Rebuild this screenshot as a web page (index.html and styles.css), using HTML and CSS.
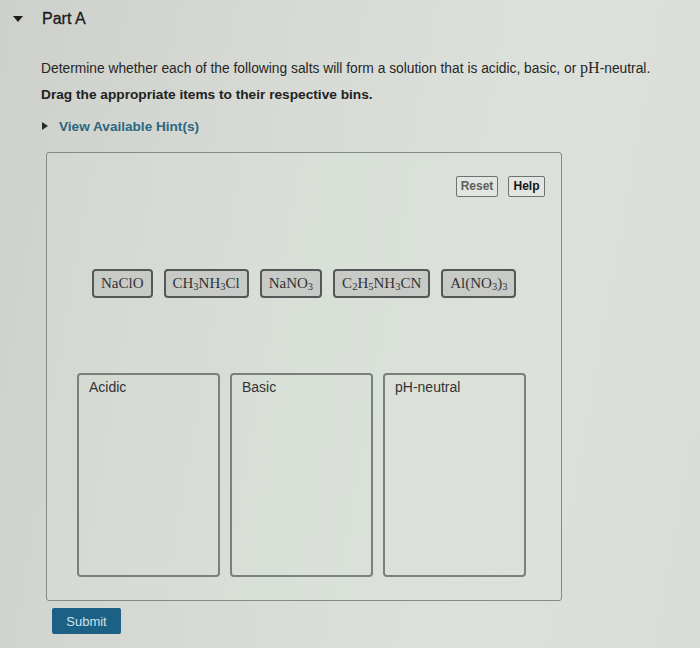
FILE: index.html
```html
<!DOCTYPE html>
<html>
<head>
<meta charset="utf-8">
<link rel="stylesheet" href="styles.css">
</head>
<body>
<div class="page">
  <div class="part-head">
    <span class="caret-down"></span>
    <span class="part-title">Part A</span>
  </div>
  <p class="prompt">Determine whether each of the following salts will form a solution that is acidic, basic, or <span class="math">pH</span>-neutral.</p>
  <p class="instr">Drag the appropriate items to their respective bins.</p>
  <div class="hint"><span class="caret-right"></span><span class="hint-text">View Available Hint(s)</span></div>

  <div class="dnd">
    <div class="toolbar">
      <button class="tbtn reset">Reset</button>
      <button class="tbtn help">Help</button>
    </div>
    <div class="chips">
      <div class="chip">NaClO</div>
      <div class="chip">CH<sub>3</sub>NH<sub>3</sub>Cl</div>
      <div class="chip">NaNO<sub>3</sub></div>
      <div class="chip">C<sub>2</sub>H<sub>5</sub>NH<sub>3</sub>CN</div>
      <div class="chip">Al(NO<sub>3</sub>)<sub>3</sub></div>
    </div>
    <div class="bins">
      <div class="bin"><span class="bin-label">Acidic</span></div>
      <div class="bin"><span class="bin-label">Basic</span></div>
      <div class="bin"><span class="bin-label">pH-neutral</span></div>
    </div>
  </div>
  <button class="submit">Submit</button>
</div>
</body>
</html>
```

FILE: styles.css
```css
html, body {
  margin: 0;
  padding: 0;
}
body {
  width: 700px;
  height: 648px;
  overflow: hidden;
  font-family: "Liberation Sans", Arial, sans-serif;
  color: #222;
  background: linear-gradient(100deg, #cdd0cb 0%, #d6d9d4 35%, #dde1db 70%, #d9dcd7 100%);
}
.page {
  padding-top: 10px;
}
.part-head {
  display: flex;
  align-items: center;
  height: 18px;
  padding-left: 13px;
}
.caret-down {
  width: 0;
  height: 0;
  border-left: 5.5px solid transparent;
  border-right: 5.5px solid transparent;
  border-top: 6px solid #1e1e1e;
  margin-right: 19px;
}
.part-title {
  font-size: 16px;
  color: #1a1a1a;
  -webkit-text-stroke: 0.3px #1a1a1a;
}
.prompt {
  margin: 31px 0 0 41px;
  font-size: 13.8px;
  line-height: 17px;
  color: #262626;
  white-space: nowrap;
}
.math {
  font-family: "Liberation Serif", "Times New Roman", serif;
  font-size: 16px;
}
.instr {
  margin: 9px 0 0 41px;
  font-size: 13.7px;
  line-height: 17px;
  font-weight: bold;
  color: #222;
}
.hint {
  display: flex;
  align-items: center;
  margin: 15px 0 0 42px;
  height: 16px;
}
.caret-right {
  width: 0;
  height: 0;
  border-top: 4.5px solid transparent;
  border-bottom: 4.5px solid transparent;
  border-left: 6px solid #2a2d2e;
  margin-right: 11px;
}
.hint-text {
  font-size: 13.6px;
  font-weight: bold;
  color: #2b6781;
}
.dnd {
  margin: 18px 0 0 46px;
  width: 514px;
  height: 447px;
  border: 1px solid #858a86;
  border-radius: 3px;
  background: linear-gradient(100deg, #d3d7d1 0%, #d9e0d8 50%, #dce2db 100%);
  box-sizing: content-box;
  display: flex;
  flex-direction: column;
}
.toolbar {
  display: flex;
  justify-content: flex-end;
  gap: 10px;
  padding: 23px 16px 0 0;
}
.tbtn {
  height: 21px;
  padding: 0 3px;
  border: 1px solid #6f736f;
  border-radius: 2px;
  background: #e2e5e1;
  font-family: "Liberation Sans", Arial, sans-serif;
  font-size: 12px;
  font-weight: bold;
  line-height: 19px;
}
.reset {
  width: 42px;
  color: #5e605e;
}
.help {
  width: 37px;
  color: #151515;
}
.chips {
  display: flex;
  gap: 11px;
  padding: 72px 0 0 45px;
}
.chip {
  height: 29px;
  box-sizing: border-box;
  padding: 0 7px;
  border: 2px solid #555856;
  border-radius: 4px;
  background: #c7cac6;
  font-family: "Liberation Serif", "Times New Roman", serif;
  font-size: 15px;
  line-height: 24px;
  color: #333;
  white-space: nowrap;
}
.chip sub {
  font-size: 10.5px;
  line-height: 0;
  vertical-align: -2px;
}
.bins {
  display: flex;
  gap: 10px;
  padding: 75px 0 0 30px;
}
.bin {
  width: 143px;
  height: 204px;
  box-sizing: border-box;
  border: 2px solid #7c807d;
  border-radius: 4px;
  padding: 3px 0 0 10px;
}
.bin-label {
  font-size: 14px;
  color: #333;
}
.submit {
  display: block;
  margin: 7px 0 0 52px;
  width: 69px;
  height: 26px;
  border: none;
  border-radius: 2px;
  background: #1d6085;
  color: #cfe2ea;
  font-family: "Liberation Sans", Arial, sans-serif;
  font-size: 13px;
  padding: 0;
}
```
